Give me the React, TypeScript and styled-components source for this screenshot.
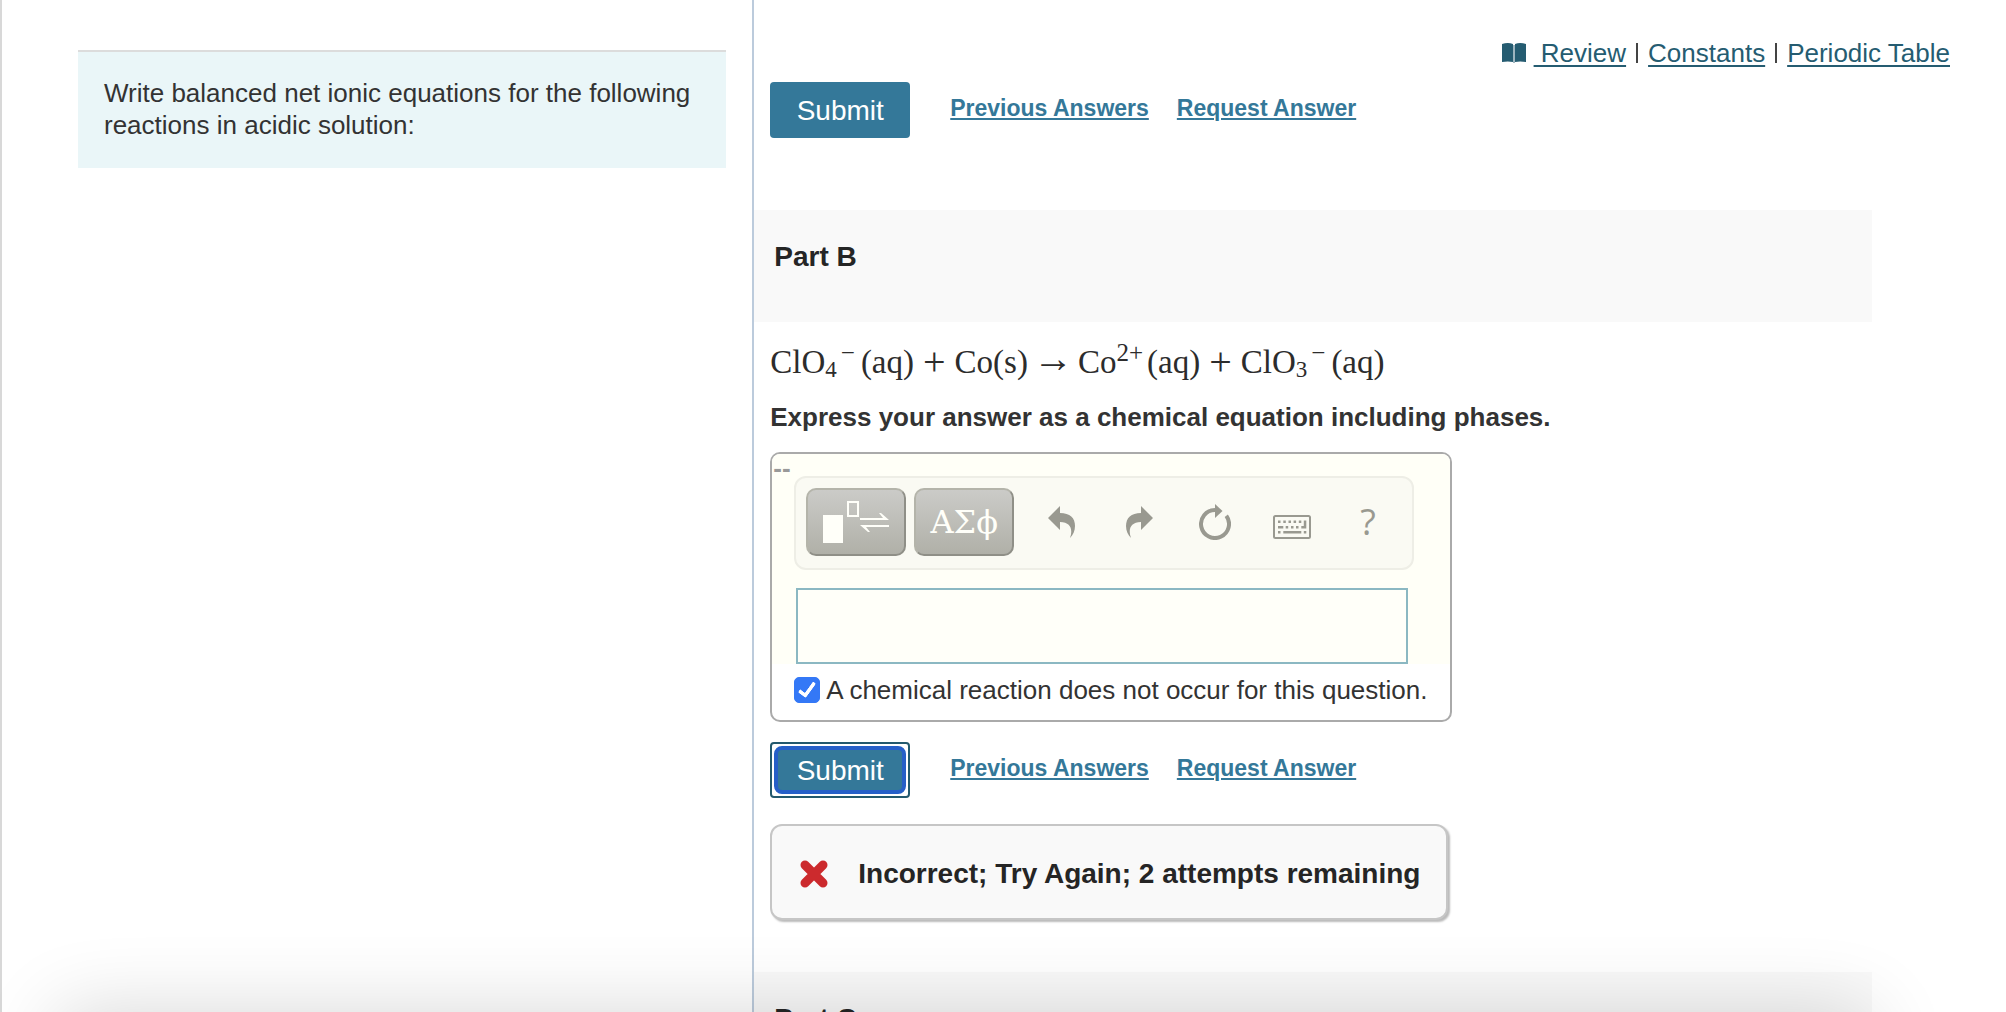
import React, { useState } from "react";
import styled, { createGlobalStyle } from "styled-components";

const GlobalStyle = createGlobalStyle`
  *, *::before, *::after { box-sizing: border-box; }
  body {
    margin: 0;
    background: #fff;
    color: #333;
    font-family: "Liberation Sans", Arial, Helvetica, sans-serif;
    font-size: 26px;
    line-height: 32px;
  }
`;

const Page = styled.div`
  display: grid;
  grid-template-columns: minmax(0, 3fr) minmax(0, 5fr);
  height: 100vh;
  overflow: hidden;
  position: relative;
`;

const Aside = styled.aside`
  padding: 50px 26px 0 76px;
  border-left: 2px solid #d8d8d8;
`;

const Prompt = styled.section`
  padding: 25px 26px;
  min-height: 118px;
  border-top: 2px solid #dcdcdc;
  background: #eaf6f8;
`;

const Main = styled.main`
  border-left: 2px solid #bccbdc;
  padding-top: 37px;
`;

const Nav = styled.nav`
  display: flex;
  justify-content: flex-end;
  align-items: center;
  gap: 8px;
  padding-right: 56px;
  margin-bottom: 13px;
`;

const NavLink = styled.a`
  color: #255c71;
  white-space: pre;
  text-decoration: underline;
  text-decoration-thickness: 2px;
  text-underline-offset: 3px;
`;

const Divider = styled.span`
  width: 2px;
  height: 20px;
  margin: 0 2px;
  background: #444;
`;

const Actions = styled.div`
  display: flex;
  align-items: center;
`;

const SubmitButton = styled.button`
  width: 140px;
  height: 56px;
  margin-right: 40px;
  padding: 2px 0 0;
  border: 0;
  border-radius: 4px;
  background: #347899;
  color: #fff;
  font: 28px/32px "Liberation Sans", Arial, sans-serif;
  cursor: pointer;
`;

const FocusedSubmit = styled(SubmitButton)`
  padding: 0;
  border: 2px solid #23596e;
  background: #fff;
`;

const FocusFace = styled.span`
  display: flex;
  align-items: center;
  justify-content: center;
  height: 48px;
  margin: 0 2px;
  padding-top: 2px;
  border: 4px solid #265fc8;
  border-radius: 8px;
  background: #347899;
`;

const ActionLinks = styled.div`
  display: flex;
  gap: 28px;
  padding-bottom: 4px;
`;

const ActionLink = styled.a`
  color: #347899;
  font-size: 23px;
  font-weight: bold;
  text-decoration: underline;
  text-decoration-thickness: 2px;
  text-underline-offset: 2px;
`;

const PartHeader = styled.header`
  margin-right: 134px;
  padding: 31px 20px 49px;
  background: #f9f9f9;
`;

const PartTitle = styled.h2`
  margin: 0;
  color: #252525;
  font-size: 28px;
  line-height: 32px;
`;

const Section = styled.div`
  padding: 0 16px;
`;

const FirstPart = styled(Section)`
  margin-bottom: 72px;
`;

const PartBody = styled(Section)`
  padding-top: 20px;
  padding-bottom: 52px;
`;

const Equation = styled.p`
  margin: 0 0 19px;
  color: #2c2c2c;
  font: 33px/40px "Liberation Serif", "Times New Roman", serif;
  white-space: nowrap;
`;

const Sub = styled.sub`
  font-size: 23px;
  line-height: 0;
  vertical-align: -4px;
`;

const Sup = styled.sup`
  margin-right: 4px;
  font-size: 25px;
  line-height: 0;
  vertical-align: 12px;
`;

const Charge = styled(Sup)`
  margin: 0 6px 0 4px;
`;

const Operator = styled.span`
  margin: 0 9px;
  font-size: 40px;
  line-height: 0;
  vertical-align: -2px;
`;

const Arrow = styled(Operator)`
  margin: 0 5px;
  vertical-align: 1px;
`;

const Instruction = styled.p`
  margin: 0 0 19px;
  font-weight: bold;
`;

const AnswerBox = styled.div`
  width: 682px;
  max-width: 100%;
  margin-bottom: 20px;
  border: 2px solid #aaa;
  border-radius: 10px;
  overflow: hidden;
`;

const Editor = styled.div`
  background: #fffff7;
`;

const EditorStatus = styled.div`
  height: 22px;
  padding-left: 1px;
  color: #999;
  font-weight: bold;
  line-height: 28px;
`;

const Toolbar = styled.div`
  display: flex;
  align-items: center;
  margin: 0 36px 18px 22px;
  padding: 10px 6px 12px 10px;
  border: 2px solid #eeeee6;
  border-radius: 12px;
  background: #fafaf3;
`;

const Palettes = styled.div`
  display: flex;
  gap: 8px;
  margin-right: 10px;
`;

const PaletteButton = styled.button`
  display: flex;
  align-items: center;
  justify-content: center;
  width: 100px;
  height: 68px;
  padding: 0;
  border: 2px solid;
  border-color: #b4b4aa #8f8f87 #8f8f87 #b4b4aa;
  border-radius: 10px;
  background: linear-gradient(#cbcbc8, #b0b0a8);
  color: #fffff9;
  font: 32px/40px "DejaVu Serif", serif;
`;

const ToolButton = styled.button`
  display: flex;
  flex: 1;
  align-items: center;
  justify-content: center;
  height: 68px;
  padding: 0;
  border: 0;
  background: none;
  color: #999990;
  font: 36px/40px "Open Sans", "Noto Sans", sans-serif;
`;

const AnswerInput = styled.input`
  display: block;
  width: calc(100% - 66px);
  height: 76px;
  margin: 0 42px 0 24px;
  padding: 0 12px;
  border: 2px solid #8bb8c2;
  background: #fffff9;
  font: inherit;
  outline: none;
`;

const CheckRow = styled.label`
  display: flex;
  align-items: center;
  gap: 6px;
  padding: 10px 22px 14px;
  white-space: nowrap;
`;

const Checkbox = styled.input`
  appearance: none;
  display: grid;
  place-items: center;
  flex: none;
  width: 26px;
  height: 26px;
  margin: 0;
  border: 1px solid #888;
  border-radius: 5px;
  background: #fff;
  &:checked {
    border-color: #3478f6;
    background: #3478f6;
  }
  &:checked::after {
    content: "";
    width: 10px;
    height: 18px;
    margin-bottom: 4px;
    border: solid #fff;
    border-width: 0 4px 4px 0;
    border-radius: 2px;
    transform: rotate(36deg);
  }
`;

const Feedback = styled.div`
  display: flex;
  width: fit-content;
  align-items: center;
  gap: 30px;
  margin-top: 26px;
  padding: 32px 26px 28px 28px;
  border: 2px solid #c6c6c6;
  border-radius: 12px;
  background: #f9f9f9;
  box-shadow: 2px 2px 2px #bbb;
  color: #252525;
  font-size: 28px;
  font-weight: bold;
`;

const BottomShade = styled.div`
  position: absolute;
  top: 100%;
  left: 58px;
  right: 136px;
  height: 200px;
  box-shadow: 0 0 80px rgba(0, 0, 0, 0.16);
  pointer-events: none;
`;

const BookIcon = () => (
  <svg width="24" height="20" viewBox="0 0 24 20" fill="#255c71" aria-hidden="true">
    <path d="M0 1Q6-1 11 1V19Q6 18 0 19Z" />
    <path d="M13 1Q18-1 24 1V19Q18 18 13 19Z" />
    <path d="M11 2H13V20H11Z" opacity=".45" />
  </svg>
);

const TemplateIcon = () => (
  <svg width="66" height="42" viewBox="0 0 66 42" fill="#fffff9" aria-hidden="true">
    <path d="M0 14H20V42H0Z" />
    <path d="M25 1H35V15H25Z" fill="none" stroke="#fffff9" strokeWidth="2" />
    <path d="M37 17H60L56 12H58L66 19H37Z" />
    <path d="M66 24V26H43L47 31H45L37 24Z" />
  </svg>
);

const UndoIcon = ({ flip = false }: { flip?: boolean }) => (
  <svg width="28" height="32" viewBox="0 0 28 32" fill="currentColor" aria-hidden="true">
    <path
      transform={flip ? "translate(28 0) scale(-1 1)" : undefined}
      d="M0 12L12 0V7C22 7 27 12 27 20C27 25 25 29 22 32C25 24 23 16 12 16V24Z"
    />
  </svg>
);

const ResetIcon = () => (
  <svg width="32" height="36" viewBox="0 0 32 36" aria-hidden="true">
    <path d="M16 6A14 14 0 1 0 27.3 11.7" fill="none" stroke="currentColor" strokeWidth="4" />
    <path d="M16 0L23.500 7L16 14Z" fill="currentColor" />
  </svg>
);

const KeyboardIcon = () => (
  <svg width="38" height="34" viewBox="0 -10 38 34" fill="currentColor" aria-hidden="true">
    <rect x="1" y="1" width="36" height="22" rx="1.500" fill="none" stroke="currentColor" strokeWidth="2" />
    <path d="M5 5.500h2.500v2.500H5zM10.300 5.500h2.500v2.500h-2.500zM15.500 5.500H18v2.500h-2.500zM20.600 5.500h2.500v2.500h-2.500zM25.800 5.500h2.500v2.500h-2.500zM30.800 5.500h2.500v8h-5v-2.500h2.500z" />
    <path d="M5 11h5.300v2.500H5zM12.700 11h2.500v2.500h-2.500zM18 11h2.500v2.500H18zM23 11h2.500v2.500H23z" />
    <path d="M5 16h2.500v2.500H5zM10.300 16h18v2.500h-18zM30.800 16h2.500v2.500h-2.500z" />
  </svg>
);

const CrossIcon = () => (
  <svg width="28" height="28" viewBox="0 0 28 28" aria-hidden="true">
    <path d="M5 5L23 23M23 5L5 23" stroke="#cc2a2d" strokeWidth="9" strokeLinecap="round" />
  </svg>
);

const HelpLinks = () => (
  <ActionLinks>
    <ActionLink href="#previous">Previous Answers</ActionLink>
    <ActionLink href="#request">Request Answer</ActionLink>
  </ActionLinks>
);

export default function App() {
  const [noReaction, setNoReaction] = useState(true);

  return (
    <>
      <GlobalStyle />
      <Page>
        <Aside>
          <Prompt>Write balanced net ionic equations for the following reactions in acidic solution:</Prompt>
        </Aside>
        <Main>
          <Nav>
            <BookIcon />
            <NavLink href="#review">{"\u00a0Review"}</NavLink>
            <Divider />
            <NavLink href="#constants">Constants</NavLink>
            <Divider />
            <NavLink href="#periodic">Periodic Table</NavLink>
          </Nav>
          <FirstPart>
            <Actions>
              <SubmitButton type="button">Submit</SubmitButton>
              <HelpLinks />
            </Actions>
          </FirstPart>

          <PartHeader>
            <PartTitle>Part B</PartTitle>
          </PartHeader>
          <PartBody>
            <Equation>
              ClO<Sub>4</Sub><Charge>−</Charge>(aq)<Operator>+</Operator>Co(s)
              <Arrow>→</Arrow>Co<Sup>2+</Sup>(aq)<Operator>+</Operator>ClO<Sub>3</Sub>
              <Charge>−</Charge>(aq)
            </Equation>
            <Instruction>Express your answer as a chemical equation including phases.</Instruction>
            <AnswerBox>
              <Editor>
                <EditorStatus>--</EditorStatus>
                <Toolbar>
                  <Palettes>
                    <PaletteButton type="button" aria-label="Templates"><TemplateIcon /></PaletteButton>
                    <PaletteButton type="button">ΑΣϕ</PaletteButton>
                  </Palettes>
                  <ToolButton type="button" aria-label="Undo"><UndoIcon /></ToolButton>
                  <ToolButton type="button" aria-label="Redo"><UndoIcon flip /></ToolButton>
                  <ToolButton type="button" aria-label="Reset"><ResetIcon /></ToolButton>
                  <ToolButton type="button" aria-label="Keyboard shortcuts"><KeyboardIcon /></ToolButton>
                  <ToolButton type="button">?</ToolButton>
                </Toolbar>
                <AnswerInput type="text" aria-label="Chemical equation" />
              </Editor>
              <CheckRow>
                <Checkbox
                  type="checkbox"
                  checked={noReaction}
                  onChange={(e) => setNoReaction(e.target.checked)}
                />
                A chemical reaction does not occur for this question.
              </CheckRow>
            </AnswerBox>
            <Actions>
              <FocusedSubmit type="button">
                <FocusFace>Submit</FocusFace>
              </FocusedSubmit>
              <HelpLinks />
            </Actions>
            <Feedback role="status">
              <CrossIcon />
              Incorrect; Try Again; 2 attempts remaining
            </Feedback>
          </PartBody>

          <PartHeader>
            <PartTitle>Part C</PartTitle>
          </PartHeader>
        </Main>
        <BottomShade />
      </Page>
    </>
  );
}
